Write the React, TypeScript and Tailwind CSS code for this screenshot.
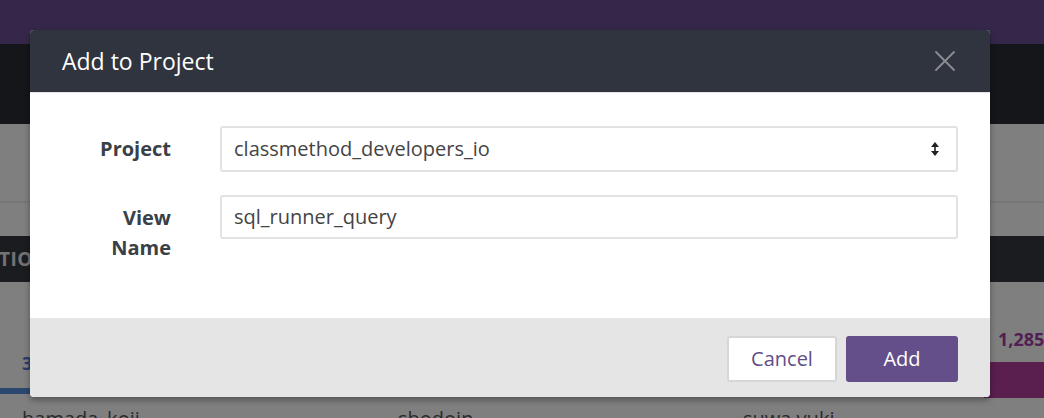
import { X } from 'lucide-react';

const font = { fontFamily: '"Open Sans", "Noto Sans", sans-serif' };

// Page that sits behind the dialog, dimmed by the backdrop
function PageBehind() {
  return (
    <div className="flex flex-col h-[418px] bg-white overflow-hidden" style={font}>
      <div className="h-[44px] shrink-0 bg-[#6a4e94]" />
      <div className="h-[80px] shrink-0 bg-[#282c32]" />
      <div className="h-[79px] shrink-0 border-b-2 border-[#eeeeee]" />
      <div className="h-[33px] shrink-0" />
      <div className="h-[46px] shrink-0 bg-[#34383f] flex items-center">
        <span className="text-[19px] font-bold text-[#e6e6e6] tracking-wide -ml-[1px]">TION</span>
      </div>
      <div className="flex justify-between h-[116px] shrink-0">
        <div className="flex flex-col w-[300px] pt-[72px]">
          <span className="pl-[22px] text-[18px] font-bold text-[#4a7ad0] leading-none">3</span>
          <div className="mt-[16px] h-[6px] bg-[#5890e0]" />
        </div>
        <div className="flex flex-col w-[60px] pt-[48px]">
          <span className="pl-[14px] text-[18px] font-bold text-[#a23fa8] leading-none">1,285</span>
          <div className="mt-[14px] h-[36px] bg-[#b43e9e]" />
        </div>
      </div>
      <div className="flex text-[20px] text-[#555] pt-[6px] shrink-0">
        <span className="w-[398px] pl-[22px]">hamada_koji</span>
        <span className="w-[345px]">shodoin</span>
        <span>suwa yuki</span>
      </div>
    </div>
  );
}

function SortArrows() {
  return (
    <svg width="10" height="14" viewBox="0 0 10 14" className="text-[#222]">
      <path d="M5 0 L9 5 H1 Z" fill="currentColor" />
      <path d="M5 14 L9 9 H1 Z" fill="currentColor" />
      <rect x="4.2" y="4" width="1.6" height="6" fill="currentColor" />
    </svg>
  );
}

function AddToProjectDialog() {
  return (
    <div className="w-[960px] rounded-[4px] bg-white shadow-[0_3px_6px_rgba(0,0,0,0.35)] overflow-hidden" style={font}>
      {/* Header */}
      <div className="h-[63px] bg-[#30343f] flex items-center justify-between pl-[32px] pr-[32px] border-b border-[#e5e5e5]">
        <h2 className="text-[23px] text-white font-normal">Add to Project</h2>
        <X className="w-[36px] h-[36px] text-[#8c8e94] -mr-[5px]" strokeWidth={1.2} />
      </div>

      {/* Form */}
      <div className="h-[225px] px-[32px] pt-[33px] flex flex-col gap-[23px]">
        <div className="flex gap-[49px]">
          <label className="w-[109px] text-right text-[20px] font-bold text-[#3a4047] leading-[30px] pt-[8px]">
            Project
          </label>
          <div className="flex-1 h-[46px] border-2 border-[#e2e2e2] rounded-[3px] flex items-center justify-between pl-[12px] pr-[16px]">
            <span className="text-[20px] text-[#444]">classmethod_developers_io</span>
            <SortArrows />
          </div>
        </div>
        <div className="flex gap-[49px]">
          <label className="w-[109px] text-right text-[20px] font-bold text-[#3a4047] leading-[30px] pt-[8px]">
            View<br />Name
          </label>
          <div className="flex-1 h-[44px] border-2 border-[#e2e2e2] rounded-[3px] flex items-center pl-[12px]">
            <span className="text-[20px] text-[#444]">sql_runner_query</span>
          </div>
        </div>
      </div>

      {/* Footer */}
      <div className="h-[79px] bg-[#e5e5e5] flex justify-end items-start gap-[9px] pt-[18px] px-[32px]">
        <button className="w-[110px] h-[46px] bg-white border-2 border-[#d6d6d6] rounded-[3px] text-[20px] text-[#5f4e86]">
          Cancel
        </button>
        <button className="w-[112px] h-[46px] bg-[#654f8a] rounded-[3px] text-[20px] text-white">
          Add
        </button>
      </div>
    </div>
  );
}

export default function App() {
  return (
    <div className="relative w-[1044px] h-[418px] overflow-hidden">
      <PageBehind />
      <div className="absolute inset-0 bg-black/50" />
      <div className="absolute left-[30px] top-[30px]">
        <AddToProjectDialog />
      </div>
    </div>
  );
}
